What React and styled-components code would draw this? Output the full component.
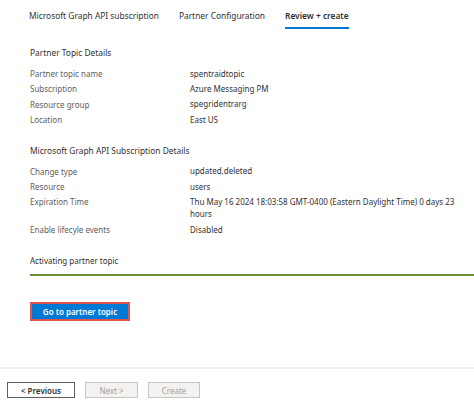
import styled, { createGlobalStyle } from "styled-components";

const Global = createGlobalStyle`
  html, body {
    margin: 0;
    padding: 0;
    background: #ffffff;
  }
  body {
    font-family: "Segoe UI", "Noto Sans", "Liberation Sans", sans-serif;
    color: #323130;
  }
`;

const Page = styled.div`
  width: 474px;
  height: 408px;
  display: flex;
  flex-direction: column;
  overflow: hidden;
`;

const Tabs = styled.nav`
  display: flex;
  gap: 20px;
  padding: 10px 0 0 29px;
`;

const Tab = styled.div`
  font-size: 8.4px;
  line-height: 12px;
  padding-bottom: 5px;
  color: #323130;
  font-weight: ${({ $active }) => ($active ? 600 : 400)};
  border-bottom: 2px solid ${({ $active }) => ($active ? "#0078d4" : "transparent")};
`;

const Body = styled.main`
  flex: 1;
  padding: 18px 0 0 30px;
`;

const Heading = styled.h3`
  margin: 0 0 7px;
  font-size: 8.4px;
  line-height: 12px;
  font-weight: 400;
  color: #323130;
`;

const Section = styled.section`
  margin-bottom: 17px;
`;

const Row = styled.div`
  display: grid;
  grid-template-columns: 160px 1fr;
  font-size: 8px;
  line-height: 15.4px;
  padding-right: 14px;
`;

const Label = styled.div`
  color: #605e5c;
`;

const Value = styled.div`
  color: #323130;
  line-height: 12.4px;
  padding: 1.5px 0;
`;

const Progress = styled.div`
  margin-top: 1px;
`;

const ProgressLabel = styled.div`
  font-size: 8px;
  line-height: 12px;
  color: #323130;
`;

const ProgressBar = styled.div`
  height: 2px;
  margin-top: 7px;
  background: #6b8e3c;
`;

const PrimaryButton = styled.button`
  margin-top: 26px;
  width: 100px;
  height: 19px;
  box-sizing: border-box;
  background: #0078d4;
  border: 2px solid #e0544d;
  color: #ffffff;
  font-family: inherit;
  font-size: 8px;
  font-weight: 600;
  padding: 0;
  cursor: pointer;
`;

const Footer = styled.footer`
  border-top: 2px solid #f0f0f0;
  display: flex;
  gap: 10px;
  padding: 13px 7px 10px;
  height: 41px;
  box-sizing: border-box;
`;

const FooterButton = styled.button`
  height: 16px;
  box-sizing: border-box;
  width: ${({ $w }) => $w}px;
  padding: 0;
  font-family: inherit;
  font-size: 8px;
  background: ${({ $disabled }) => ($disabled ? "#f3f2f1" : "#ffffff")};
  color: ${({ $disabled }) => ($disabled ? "#a19f9d" : "#323130")};
  border: 1px solid ${({ $disabled }) => ($disabled ? "#c8c6c4" : "#605e5c")};
  font-weight: ${({ $disabled }) => ($disabled ? 400 : 600)};
`;

const topic = [
  ["Partner topic name", "spentraidtopic"],
  ["Subscription", "Azure Messaging PM"],
  ["Resource group", "spegridentrarg"],
  ["Location", "East US"],
];

const graph = [
  ["Change type", "updated,deleted"],
  ["Resource", "users"],
  [
    "Expiration Time",
    "Thu May 16 2024 18:03:58 GMT-0400 (Eastern Daylight Time) 0 days 23 hours",
  ],
  ["Enable lifecyle events", "Disabled"],
];

const App = () => {
  return (
    <>
      <Global />
      <Page>
        <Tabs>
          <Tab>Microsoft Graph API subscription</Tab>
          <Tab>Partner Configuration</Tab>
          <Tab $active>Review + create</Tab>
        </Tabs>
        <Body>
          <Section>
            <Heading>Partner Topic Details</Heading>
            {topic.map(([k, v]) => (
              <Row key={k}>
                <Label>{k}</Label>
                <Value>{v}</Value>
              </Row>
            ))}
          </Section>
          <Section>
            <Heading>Microsoft Graph API Subscription Details</Heading>
            {graph.map(([k, v]) => (
              <Row key={k}>
                <Label>{k}</Label>
                <Value>{v}</Value>
              </Row>
            ))}
          </Section>
          <Progress>
            <ProgressLabel>Activating partner topic</ProgressLabel>
            <ProgressBar />
          </Progress>
          <PrimaryButton>Go to partner topic</PrimaryButton>
        </Body>
        <Footer>
          <FooterButton $w={68}>&lt; Previous</FooterButton>
          <FooterButton $w={53} $disabled>Next &gt;</FooterButton>
          <FooterButton $w={52} $disabled>Create</FooterButton>
        </Footer>
      </Page>
    </>
  );
};

export default App;
